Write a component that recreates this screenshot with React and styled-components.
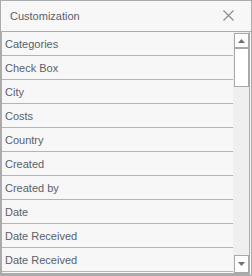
import React from 'react';
import styled, { createGlobalStyle } from 'styled-components';

const Global = createGlobalStyle`
  html, body { margin: 0; padding: 0; background: #ffffff; }
  * { box-sizing: border-box; }
`;

const Panel = styled.div`
  width: 252px;
  height: 276px;
  border: 1px solid #ababab;
  background: #f7f7f7;
  display: flex;
  flex-direction: column;
  font-family: "Liberation Sans", Arial, sans-serif;
  font-size: 11px;
  color: #5a5f6a;
`;

const Header = styled.div`
  height: 31px;
  flex: none;
  display: flex;
  align-items: center;
  justify-content: space-between;
  padding: 0 17px 1px 9px;
  border-bottom: 1px solid #ababab;
  background: #f7f7f7;
`;

const Close = styled.button`
  border: 0;
  background: none;
  padding: 0;
  width: 11px;
  height: 11px;
  display: flex;
  cursor: pointer;
`;

const Body = styled.div`
  flex: 1;
  display: flex;
  border-left: 1px solid #ababab;
  border-bottom: 2px solid #ababab;
  margin-right: 1px;
  min-height: 0;
`;

const List = styled.div`
  flex: 1;
  overflow: hidden;
`;

const Row = styled.div`
  height: 24px;
  display: flex;
  align-items: center;
  padding: 1px 0 0 3px;
  border-bottom: 1px solid #b4b4b4;
  background: #f7f7f7;
  white-space: nowrap;
`;

const Scroll = styled.div`
  width: 17px;
  flex: none;
  background: #efefef;
  display: flex;
  flex-direction: column;
  padding: 1px 1px 0 1px;
  border-right: 1px solid #ababab;
`;

const Arrow = styled.div`
  width: 15px;
  height: ${p => p.$h}px;
  flex: none;
  border: 1px solid #a8a8a8;
  background: #fdfdfd;
  display: flex;
  align-items: center;
  justify-content: center;
`;

const Thumb = styled.div`
  width: 15px;
  height: 39px;
  flex: none;
  border: 1px solid #a8a8a8;
  background: #ffffff;
`;

const Track = styled.div`
  flex: 1;
`;

const items = [
  'Categories', 'Check Box', 'City', 'Costs', 'Country', 'Created',
  'Created by', 'Date', 'Date Received', 'Date Received',
];

const Tri = ({ down }) => (
  <svg width="7" height="4" viewBox="0 0 7 4">
    <path d={down ? 'M0 0H7L3.5 4Z' : 'M0 4H7L3.5 0Z'} fill="#6f6f6f" />
  </svg>
);

export default function App() {
  return (
    <>
      <Global />
      <Panel>
        <Header>
          <span>Customization</span>
          <Close aria-label="close">
            <svg width="11" height="11" viewBox="0 0 11 11">
              <path d="M0.5 0.5L10.5 10.5M10.5 0.5L0.5 10.5" stroke="#8a8a8a" strokeWidth="1.1" />
            </svg>
          </Close>
        </Header>
        <Body>
          <List>
            {items.map((t, i) => <Row key={i}>{t}</Row>)}
          </List>
          <Scroll>
            <Arrow $h={15}><Tri /></Arrow>
            <Thumb />
            <Track />
            <Arrow $h={18}><Tri down /></Arrow>
          </Scroll>
        </Body>
      </Panel>
    </>
  );
}
